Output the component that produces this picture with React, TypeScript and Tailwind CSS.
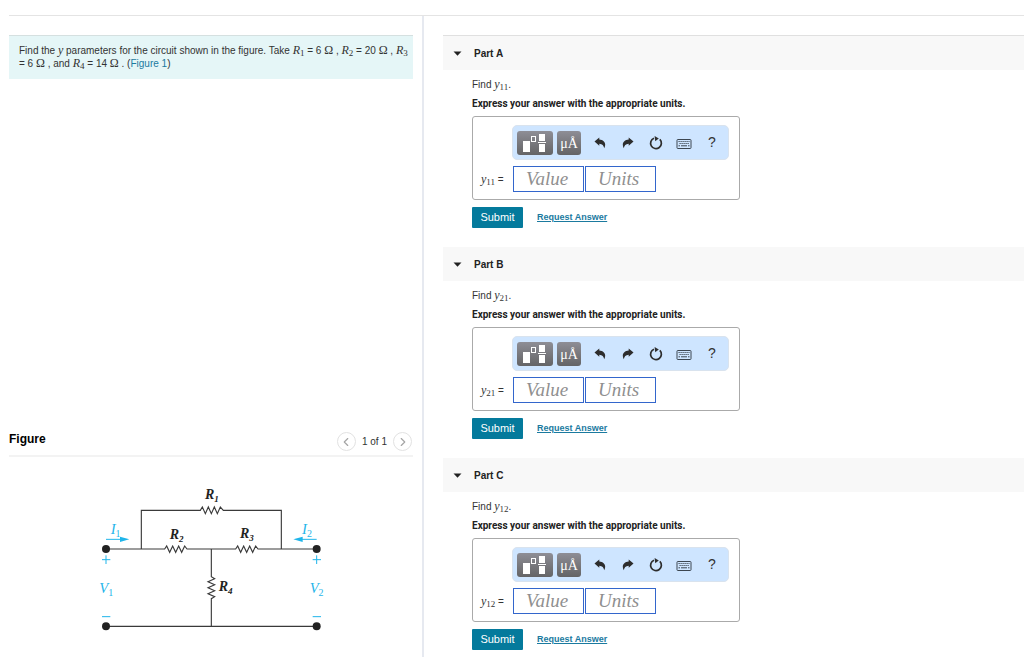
import React from "react";
import { ChevronLeft, ChevronRight } from "lucide-react";

const parts = [
  { letter: "A", sub: "11" },
  { letter: "B", sub: "21" },
  { letter: "C", sub: "12" },
];

type MathVarProps = { name: string; sub?: string };

const MathVar = ({ name, sub }: MathVarProps) => (
  <span className="font-['Liberation_Serif',serif] text-[12px] leading-none whitespace-nowrap">
    <i>{name}</i>
    {sub && <sub className="text-[9px]">{sub}</sub>}
  </span>
);

const Ohm = () => (
  <span className="font-['Liberation_Serif',serif] text-[12px] leading-none">Ω</span>
);

const TemplatesIcon = () => (
  <svg width="26" height="20" viewBox="0 0 26 20" aria-hidden="true">
    <rect x="1" y="8" width="7" height="11" fill="#fff" />
    <rect x="9.5" y="3.5" width="4" height="5" fill="none" stroke="#fff" />
    <rect x="17" y="1" width="6" height="7" fill="#fff" />
    <rect x="16" y="9" width="8" height="1" fill="#fff" />
    <rect x="17" y="11" width="6" height="8" fill="#fff" />
  </svg>
);

const UndoIcon = () => (
  <svg width="12" height="12" viewBox="0 0 12 12" fill="#2d2d2d" aria-hidden="true">
    <path d="M0.5 4.6L5.3 0.4V2.6C9 2.8 11.2 5 11.2 7.8C11.2 9.1 10.8 10.2 10.2 11.2C9.7 8.6 8.4 7 5.3 6.8V8.8Z" />
  </svg>
);

const RedoIcon = () => (
  <svg width="12" height="12" viewBox="0 0 12 12" fill="#2d2d2d" aria-hidden="true">
    <path d="M11.5 4.6L6.7 0.4V2.6C3 2.8 0.8 5 0.8 7.8C0.8 9.1 1.2 10.2 1.8 11.2C2.3 8.6 3.6 7 6.7 6.8V8.8Z" />
  </svg>
);

const ResetIcon = () => (
  <svg width="14" height="14" viewBox="0 0 14 14" fill="none" aria-hidden="true">
    <path d="M10.8 3.4A5.4 5.4 0 1 1 5 2.2" stroke="#2d2d2d" strokeWidth="1.7" />
    <path d="M5.6 0L9.8 2.6L6.2 5.2Z" fill="#2d2d2d" />
  </svg>
);

const KeyboardIcon = () => (
  <svg width="16" height="10" viewBox="0 0 16 10" fill="none" stroke="#3c4650" aria-hidden="true">
    <rect x="1" y="0.5" width="14" height="9" rx="0.8" />
    <path d="M2.5 2.5H13.5M3.5 4.5H13.5" strokeWidth="1.2" strokeDasharray="1.2 0.8" />
    <path d="M2.5 6.8H4M5 6.8H11M12 6.8H13.5" />
  </svg>
);

const Circuit = () => (
  <svg
    width="260"
    height="160"
    viewBox="0 0 780 480"
    fill="none"
    role="img"
    aria-label="Two-port circuit with four resistors"
  >
    <g stroke="#3a3a3a" strokeWidth="3.4">
      <path d="M184 207V91H361l6 -10l9 20l9 -20l9 20l9 -20l9 20l9 -20l9 10H604V207" />
      <path d="M78 207H254l6 -9l9 19l9 -19l9 19l9 -19l9 19l9 -19l7 9H467l6 -9l9 19l9 -19l9 19l9 -19l9 19l9 -19l7 9H710" />
      <path d="M394 207V290l10 6l-20 9l20 9l-20 9l20 9l-20 9l20 9l-10 6V439" />
      <path d="M78 439H710" />
    </g>
    <g fill="#222">
      <circle cx="78" cy="207" r="12" />
      <circle cx="710" cy="207" r="12" />
      <circle cx="78" cy="439" r="12" />
      <circle cx="710" cy="439" r="12" />
    </g>
    <g stroke="#1fb5ea" strokeWidth="3">
      <path d="M78 178H124M662 178H710" />
      <path d="M66 239H91M78 226V252M698 239H723M710 226V252" />
      <path d="M66 410H91M698 410H723" />
    </g>
    <path d="M120 170L148 178L120 186ZM668 170L640 178L668 186Z" fill="#1fb5ea" />
    <g
      fill="#222"
      fontFamily="Liberation Serif, serif"
      fontSize="42"
      fontStyle="italic"
      fontWeight="bold"
    >
      <text x="375" y="57">R<tspan fontSize="27" dy="10">1</tspan></text>
      <text x="269" y="177">R<tspan fontSize="27" dy="10">2</tspan></text>
      <text x="480" y="174">R<tspan fontSize="27" dy="10">3</tspan></text>
      <text x="416" y="333">R<tspan fontSize="27" dy="10">4</tspan></text>
    </g>
    <g fill="#1fb5ea" fontFamily="Liberation Serif, serif" fontSize="44">
      <text x="92" y="162"><tspan fontStyle="italic">I</tspan><tspan fontSize="30" dy="9">1</tspan></text>
      <text x="666" y="162"><tspan fontStyle="italic">I</tspan><tspan fontSize="30" dy="9">2</tspan></text>
      <text x="58" y="338"><tspan fontStyle="italic">V</tspan><tspan fontSize="30" dy="9">1</tspan></text>
      <text x="689" y="338"><tspan fontStyle="italic">V</tspan><tspan fontSize="30" dy="9">2</tspan></text>
    </g>
  </svg>
);

const Toolbar = () => (
  <div className="flex h-[35px] w-[217px] items-center rounded-[5px] border border-[#d9e3ee] bg-[#cee5ff] pl-1">
    <button
      aria-label="Templates"
      className="flex h-6 w-9 items-center justify-center rounded-[3px] bg-linear-to-b from-[#8e8e96] to-[#646466]"
    >
      <TemplatesIcon />
    </button>
    <button
      aria-label="Symbols"
      className="ml-1 h-6 w-6 rounded-[3px] bg-linear-to-b from-[#8e8e96] to-[#646466] pt-px font-['Liberation_Serif',serif] text-[14px] leading-6 text-white"
    >
      μÅ
    </button>
    <div className="ml-[5px] flex flex-1 items-center">
      <button aria-label="Undo" className="flex w-7 justify-center">
        <UndoIcon />
      </button>
      <button aria-label="Redo" className="flex w-7 justify-center">
        <RedoIcon />
      </button>
      <button aria-label="Reset" className="flex w-7 justify-center">
        <ResetIcon />
      </button>
      <button aria-label="Keyboard" className="flex w-7 justify-center pt-[2px]">
        <KeyboardIcon />
      </button>
      <button aria-label="Help" className="w-7 text-[14px] text-[#333]">
        ?
      </button>
    </div>
  </div>
);

type PartProps = { letter: string; sub: string };

const Part = ({ letter, sub }: PartProps) => (
  <section>
    <h2 className="flex h-[34px] items-center bg-[#f8f8f8] text-[10px] font-bold text-[#222]">
      <button className="flex items-center gap-3 pl-[10px]">
        <svg width="9" height="5" viewBox="0 0 9 5" fill="#222" aria-hidden="true">
          <path d="M0.5 0.5H8.5L4.5 4.8Z" />
        </svg>
        Part {letter}
      </button>
    </h2>
    <div className="pt-2 pb-[19px] pl-[29px]">
      <p className="h-[14px] leading-3">
        Find <MathVar name="y" sub={sub} />.
      </p>
      <p className="mt-[5px] h-[19px] font-[Roboto,sans-serif] text-[10px] leading-[14px] font-bold whitespace-nowrap text-[#222]">
        Express your answer with the appropriate units.
      </p>
      <div className="h-[84px] w-[268px] rounded-[3px] border border-[#aaa] pt-2">
        <div className="pl-[39px]">
          <Toolbar />
        </div>
        <div className="mt-[6px] flex items-center">
          <span className="w-10 pl-2 whitespace-nowrap">
            <MathVar name="y" sub={sub} /> =
          </span>
          <input
            aria-label={`y${sub} value`}
            placeholder="Value"
            className="h-[26px] w-[71px] border border-[#3366cc] pl-3 font-['Liberation_Serif',serif] text-[19px] italic placeholder:text-[#8f8f8f]"
          />
          <input
            aria-label={`y${sub} units`}
            placeholder="Units"
            className="ml-px h-[26px] w-[71px] border border-[#3366cc] pl-3 font-['Liberation_Serif',serif] text-[19px] italic placeholder:text-[#8f8f8f]"
          />
        </div>
      </div>
      <div className="mt-[7px] flex items-center">
        <button className="h-[21px] w-[51px] rounded-[1px] bg-[#047a9c] text-[11px] text-white">
          Submit
        </button>
        <a href="#" className="ml-[14px] text-[9px] font-bold text-[#1b7a9f] underline">
          Request Answer
        </a>
      </div>
    </div>
  </section>
);

const App = () => {
  return (
    <div className="bg-white pt-[15px] pl-[9px] font-['Liberation_Sans',Arial,sans-serif] text-[10px] text-[#333]">
      <main className="flex border-t border-[#e4e4e4]">
        <div className="w-[415px] shrink-0 border-r-2 border-[#e6e9f0] pt-[19px] pr-[9px]">
          <div className="h-11 border-t border-[#d5e0e0] bg-[#e5f6f7] pt-2 pl-[10px] leading-3">
            Find the <MathVar name="y" /> parameters for the circuit shown in the figure. Take{" "}
            <MathVar name="R" sub="1" /> = 6 <Ohm /> , <MathVar name="R" sub="2" /> = 20 <Ohm /> ,{" "}
            <MathVar name="R" sub="3" /> = 6 <Ohm /> , and <MathVar name="R" sub="4" /> = 14{" "}
            <Ohm /> . (
            <a href="#figure" className="text-[#1b7a9f]">
              Figure 1
            </a>
            )
          </div>
          <section id="figure" className="mt-[350px]">
            <div className="flex h-7 items-start justify-between border-b-2 border-[#f3f3f3]">
              <h2 className="pt-[2px] text-[12px] leading-4 font-bold text-black">Figure</h2>
              <div className="flex items-center gap-[6px] pt-[3px] pr-px text-[10px]">
                <button
                  aria-label="Previous figure"
                  className="flex size-[19px] items-center justify-center rounded-full border border-[#e2e2e2] text-[#a5a5a5]"
                >
                  <ChevronLeft size={14} />
                </button>
                1 of 1
                <button
                  aria-label="Next figure"
                  className="flex size-[19px] items-center justify-center rounded-full border border-[#e2e2e2] text-[#a5a5a5]"
                >
                  <ChevronRight size={14} />
                </button>
              </div>
            </div>
            <div className="pt-[23px] pl-[71px]">
              <Circuit />
            </div>
          </section>
        </div>
        <div className="min-w-0 flex-1 pt-[19px] pl-[19px]">
          <div className="border-t border-[#e0e0e0]">
            {parts.map((part) => (
              <Part key={part.letter} letter={part.letter} sub={part.sub} />
            ))}
          </div>
        </div>
      </main>
    </div>
  );
};

export default App;
